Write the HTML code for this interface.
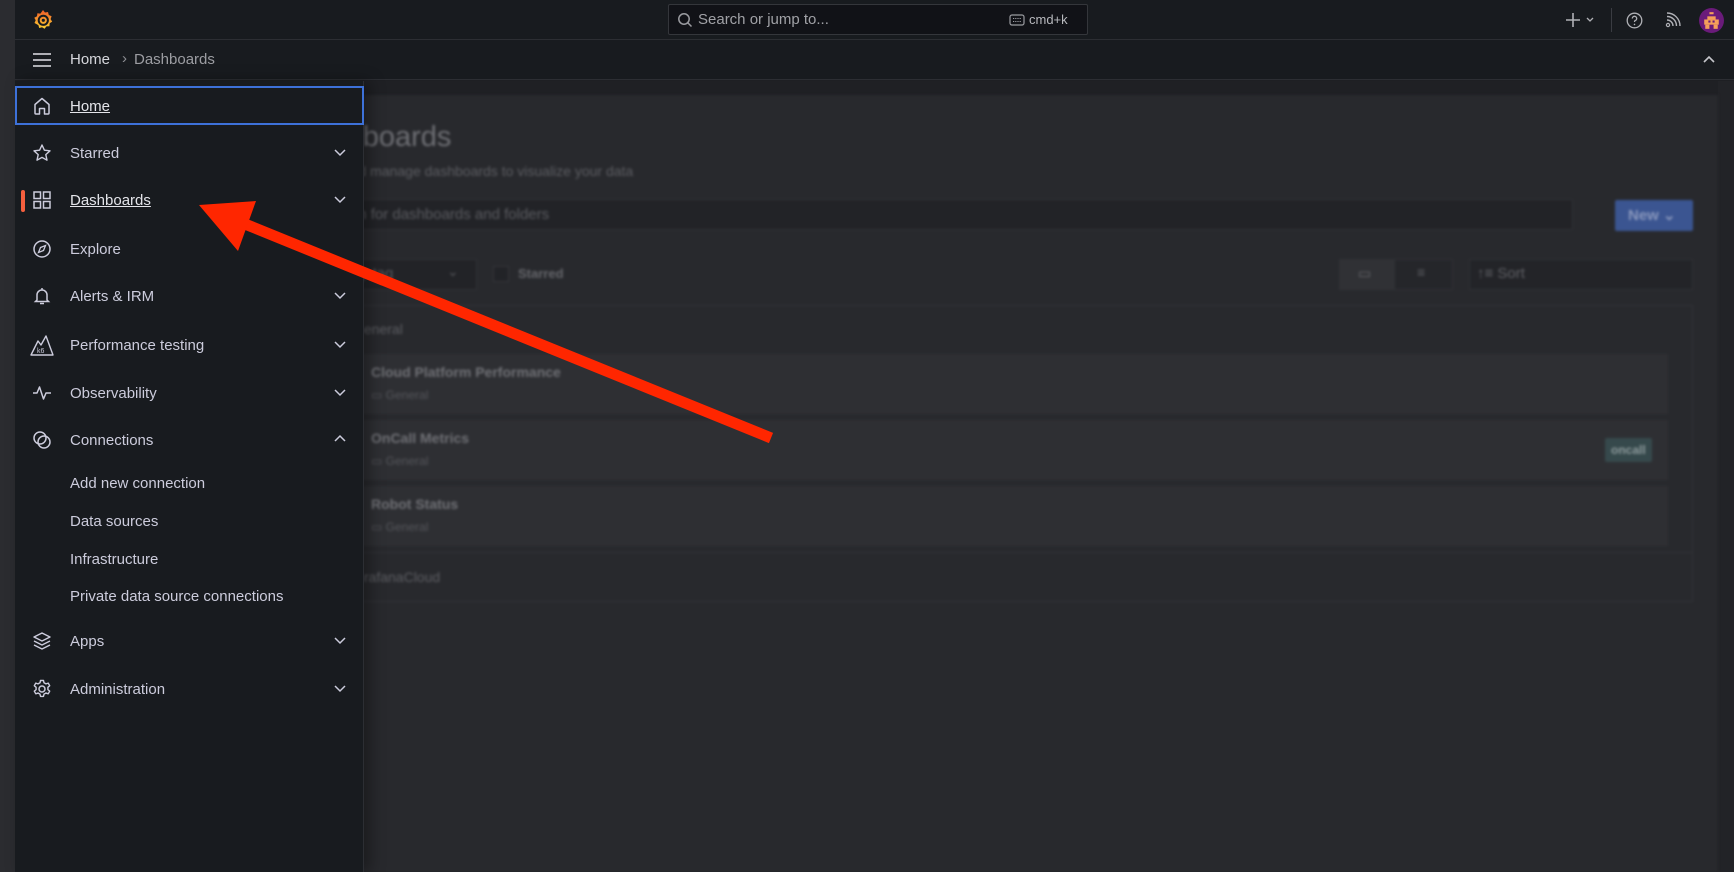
<!DOCTYPE html>
<html><head><meta charset="utf-8"><style>
*{box-sizing:border-box;margin:0;padding:0}
body{width:1734px;height:872px;overflow:hidden;background:#1e1f23;font-family:"Liberation Sans",sans-serif;position:relative}
.abs{position:absolute}
#left{left:0;top:0;width:15px;height:872px;background:#2b2c30}
#top{left:15px;top:0;right:0;height:40px;background:#181b1f;border-bottom:1px solid #2c2e33}
#crumb{left:15px;top:40px;right:0;height:40px;background:#181b1f;border-bottom:1px solid #2c2e33}
#main{left:15px;top:81px;right:0;bottom:0;background:#1f2024}
#panel{left:355px;top:95px;width:1363px;bottom:0;background:#28292d;filter:blur(1.2px)}
#rcol{left:1718px;top:81px;width:16px;bottom:0;background:#222327}
.t{color:#6c6d72;position:absolute;white-space:nowrap}
#side{left:15px;top:81px;width:349px;bottom:0;background:#181b1f;border-right:1px solid #2c2e33;box-shadow:6px 0 14px rgba(0,0,0,.35)}
.it{position:absolute;left:0;width:349px;height:40px;display:flex;align-items:center;color:#ccccdc;font-size:15px}
.it .ic{position:absolute;left:17px;top:10px;width:20px;height:20px}
.it .lb{position:absolute;left:55px}
.it .ch{position:absolute;left:318px;top:14px}
.sub{position:absolute;left:55px;color:#ccccdc;font-size:15px}
svg{display:block}
</style></head><body>
<div class="abs" id="left"></div>
<div class="abs" id="top">
 <svg class="abs" style="left:16px;top:8px" width="24" height="24" viewBox="0 0 24 24"><defs><linearGradient id="g" x1="0" y1="1" x2="0" y2="0"><stop offset="0" stop-color="#fcd130"/><stop offset="1" stop-color="#f05a28"/></linearGradient></defs><path d="M12 2l2 2.5 3-.5 .8 3 2.8 1.3-1 2.8 1.6 2.5-2.5 1.6-.3 3-3 .2-1.8 2.4-2.6-1.5-2.8.7-.8-2.9L3.5 15l1.2-2.7L3.3 9.7 6 8.3l.4-3 3 .3z" fill="url(#g)"/><circle cx="12.3" cy="12.3" r="4.6" fill="none" stroke="#181b1f" stroke-width="2"/><circle cx="12.3" cy="12.3" r="1.6" fill="#181b1f"/></svg>
 <div class="abs" style="left:653px;top:4px;width:420px;height:31px;background:#111217;border:1px solid #34363b;border-radius:2px">
  <svg class="abs" style="left:8px;top:7px" width="16" height="16" viewBox="0 0 16 16"><circle cx="7" cy="7" r="5.2" fill="none" stroke="#9a9ba0" stroke-width="1.5"/><path d="M11 11l3.5 3.5" stroke="#9a9ba0" stroke-width="1.5"/></svg>
  <span class="abs" style="left:29px;top:6px;color:#a0a1a6;font-size:15px">Search or jump to...</span>
  <svg class="abs" style="left:340px;top:9px" width="16" height="12" viewBox="0 0 16 12"><rect x="1" y="1" width="14" height="10" rx="2" fill="none" stroke="#9a9ba0" stroke-width="1.2"/><path d="M4 4.5h8M4 7.5h8" stroke="#9a9ba0" stroke-dasharray="1.2 1"/></svg>
  <span class="abs" style="left:360px;top:7px;color:#b8b9be;font-size:13px">cmd+k</span>
 </div>
 <svg class="abs" style="left:1550px;top:12px" width="16" height="16" viewBox="0 0 16 16"><path d="M8 1v14M1 8h14" stroke="#b0b1b6" stroke-width="1.6"/></svg>
 <svg class="abs" style="left:1570px;top:16px" width="10" height="8" viewBox="0 0 10 8"><path d="M2 2l3 3 3-3" fill="none" stroke="#b0b1b6" stroke-width="1.3"/></svg>
 <div class="abs" style="left:1596px;top:8px;width:1px;height:24px;background:#3a3c42"></div>
 <svg class="abs" style="left:1611px;top:12px" width="17" height="17" viewBox="0 0 17 17"><circle cx="8.5" cy="8.5" r="7.3" fill="none" stroke="#b0b1b6" stroke-width="1.3"/><path d="M6.3 6.5a2.2 2.2 0 1 1 2.8 2.1c-.6.2-.6.8-.6 1.4" fill="none" stroke="#b0b1b6" stroke-width="1.3"/><circle cx="8.5" cy="12.4" r=".8" fill="#b0b1b6"/></svg>
 <svg class="abs" style="left:1650px;top:12px" width="16" height="16" viewBox="0 0 16 16"><circle cx="3" cy="13" r="1.6" fill="none" stroke="#b0b1b6" stroke-width="1.2"/><path d="M2 8a6 6 0 0 1 6 6M2 4.5a9.5 9.5 0 0 1 9.5 9.5M2 1a13 13 0 0 1 13 13" fill="none" stroke="#b0b1b6" stroke-width="1.4"/></svg>
 <svg class="abs" style="left:1684px;top:8px" width="25" height="25" viewBox="0 0 24 24"><circle cx="12" cy="12" r="12" fill="#6a1b7a"/><rect x="10" y="4" width="4" height="2" fill="#f5a05a"/><rect x="8" y="8" width="8" height="3" fill="#f5a05a"/><rect x="5" y="11" width="14" height="5" fill="#f5a05a"/><rect x="6" y="16" width="4" height="4" fill="#f5a05a"/><rect x="14" y="16" width="4" height="4" fill="#f5a05a"/><rect x="9" y="12" width="2" height="2" fill="#6a1b7a"/><rect x="13" y="12" width="2" height="2" fill="#6a1b7a"/></svg>
</div>
<div class="abs" id="crumb">
 <svg class="abs" style="left:17px;top:12px" width="20" height="16" viewBox="0 0 20 16"><path d="M1 2h18M1 8h18M1 14h18" stroke="#c5c6cb" stroke-width="1.7"/></svg>
 <span class="abs" style="left:55px;top:11px;color:#d6d7dc;font-size:15px">Home</span>
 <span class="abs" style="left:107px;top:10px;color:#8e8f94;font-size:15px">›</span>
 <span class="abs" style="left:119px;top:11px;color:#9c9da2;font-size:15px">Dashboards</span>
 <svg class="abs" style="left:1687px;top:15px" width="14" height="10" viewBox="0 0 14 10"><path d="M2 7l5-5 5 5" fill="none" stroke="#c5c6cb" stroke-width="1.6"/></svg>
</div>
<div class="abs" id="main"></div>
<div class="abs" id="rcol"></div>
<div class="abs" id="panel">
 <div class="t" style="left:-60px;top:26px;font-size:29px;color:#6e6f74">Dashboards</div>
 <div class="t" style="left:-58px;top:68px;font-size:14px;color:#5c5d62">Create and manage dashboards to visualize your data</div>
 <div class="abs" style="left:0;top:104px;width:1218px;height:31px;background:#222327;border:1px solid #303136;border-radius:2px"></div>
 <div class="t" style="left:-36px;top:111px;font-size:15px;color:#5a5b60">Search for dashboards and folders</div>
 <div class="abs" style="left:1260px;top:105px;width:78px;height:31px;background:#3b5591;border-radius:2px"></div>
 <div class="t" style="left:1273px;top:111px;font-size:15px;color:#8a98bd;font-weight:bold">New ⌄</div>
 <div class="abs" style="left:0;top:164px;width:122px;height:31px;background:#222327;border:1px solid #303136"></div>
 <div class="t" style="left:-40px;top:170px;font-size:15px;color:#55565b">Filter by tag</div>
 <div class="t" style="left:92px;top:168px;font-size:14px;color:#55565b">⌄</div>
 <div class="abs" style="left:138px;top:171px;width:16px;height:16px;background:#222327;border:1px solid #34353a"></div>
 <div class="t" style="left:163px;top:171px;font-size:13px;color:#65666b;font-weight:bold">Starred</div>
 <div class="abs" style="left:984px;top:164px;width:114px;height:31px;border:1px solid #303136;background:#25262a"><div style="width:55px;height:29px;background:#303135"></div></div>
 <div class="t" style="left:1003px;top:170px;font-size:14px;color:#66676c">▭</div>
 <div class="t" style="left:1062px;top:169px;font-size:14px;color:#5a5b60">≡</div>
 <div class="abs" style="left:1114px;top:164px;width:224px;height:31px;border:1px solid #303136;background:#232428"></div>
 <div class="t" style="left:1122px;top:170px;font-size:15px;color:#5e5f64">↑≡ Sort</div>
 <div class="abs" style="left:0;top:210px;width:1338px;height:297px;border:1px solid #313237;background:#28292d"></div>
 <div class="t" style="left:-2px;top:226px;font-size:14px;color:#5c5d62">General</div>
 <div class="abs" style="left:0;top:259px;width:1313px;height:60px;background:#2e2f33"></div>
 <div class="t" style="left:16px;top:269px;font-size:14px;color:#707176;font-weight:bold">Cloud Platform Performance</div>
 <div class="t" style="left:16px;top:293px;font-size:12px;color:#55565b">▭ General</div>
 <div class="abs" style="left:0;top:325px;width:1313px;height:60px;background:#2e2f33"></div>
 <div class="t" style="left:16px;top:335px;font-size:14px;color:#707176;font-weight:bold">OnCall Metrics</div>
 <div class="t" style="left:16px;top:359px;font-size:12px;color:#55565b">▭ General</div>
 <div class="abs" style="left:1250px;top:343px;width:47px;height:24px;background:#36494c;border-radius:2px"></div>
 <div class="t" style="left:1256px;top:348px;font-size:12px;color:#8d9a9c;font-weight:bold">oncall</div>
 <div class="abs" style="left:0;top:391px;width:1313px;height:60px;background:#2e2f33"></div>
 <div class="t" style="left:16px;top:401px;font-size:14px;color:#707176;font-weight:bold">Robot Status</div>
 <div class="t" style="left:16px;top:425px;font-size:12px;color:#55565b">▭ General</div>
 <div class="abs" style="left:0;top:457px;width:1338px;height:1px;background:#313237"></div>
 <div class="t" style="left:-2px;top:474px;font-size:14px;color:#5c5d62">GrafanaCloud</div>
</div>
<div class="abs" id="side">
 <div class="abs" style="left:0;top:5px;width:349px;height:39px;border:2px solid #3d71d9"></div>
 <div class="it" style="top:5px"><svg class="ic" viewBox="0 0 20 20"><path d="M3 8.5L10 2.5l7 6V17a1 1 0 0 1-1 1h-3.5v-5.5h-5V18H4a1 1 0 0 1-1-1z" fill="none" stroke="#ccccdc" stroke-width="1.5" stroke-linejoin="round"/></svg><span class="lb" style="text-decoration:underline;color:#e4e5ea">Home</span></div>
 <div class="it" style="top:52px"><svg class="ic" viewBox="0 0 20 20"><path d="M10 2l2.4 5.2 5.6.6-4.2 3.8 1.2 5.6L10 14.4 5 17.2l1.2-5.6L2 7.8l5.6-.6z" fill="none" stroke="#ccccdc" stroke-width="1.4" stroke-linejoin="round"/></svg><span class="lb">Starred</span><svg class="ch" width="14" height="10" viewBox="0 0 14 10"><path d="M2 3l5 5 5-5" fill="none" stroke="#ccccdc" stroke-width="1.5"/></svg></div>
 <div class="abs" style="left:6px;top:109px;width:4px;height:22px;background:#f55f3e;border-radius:2px"></div>
 <div class="it" style="top:99px"><svg class="ic" viewBox="0 0 20 20"><g fill="none" stroke="#ccccdc" stroke-width="1.5"><rect x="2" y="2" width="6.5" height="6.5"/><rect x="11.5" y="2" width="6.5" height="6.5"/><rect x="2" y="11.5" width="6.5" height="6.5"/><rect x="11.5" y="11.5" width="6.5" height="6.5"/></g></svg><span class="lb" style="text-decoration:underline;color:#e4e5ea">Dashboards</span><svg class="ch" width="14" height="10" viewBox="0 0 14 10"><path d="M2 3l5 5 5-5" fill="none" stroke="#ccccdc" stroke-width="1.5"/></svg></div>
 <div class="it" style="top:148px"><svg class="ic" viewBox="0 0 20 20"><circle cx="10" cy="10" r="8" fill="none" stroke="#ccccdc" stroke-width="1.5"/><path d="M13.5 6.5l-2 5-5 2 2-5z" fill="none" stroke="#ccccdc" stroke-width="1.3"/></svg><span class="lb">Explore</span></div>
 <div class="it" style="top:195px"><svg class="ic" viewBox="0 0 20 20"><path d="M5 14V9a5 5 0 0 1 10 0v5l1.5 1.5h-13zM8 17.5h4M10 2v2" fill="none" stroke="#ccccdc" stroke-width="1.5"/></svg><span class="lb">Alerts &amp; IRM</span><svg class="ch" width="14" height="10" viewBox="0 0 14 10"><path d="M2 3l5 5 5-5" fill="none" stroke="#ccccdc" stroke-width="1.5"/></svg></div>
 <div class="it" style="top:244px"><svg class="ic" style="left:15px;width:24px;height:24px;top:8px" viewBox="0 0 24 24"><path d="M1 22L8 8l3 4 5-9 7 19z" fill="none" stroke="#ccccdc" stroke-width="1.4" stroke-linejoin="round"/><text x="7" y="20" font-size="7" fill="#ccccdc" font-family="Liberation Sans">k6</text></svg><span class="lb">Performance testing</span><svg class="ch" width="14" height="10" viewBox="0 0 14 10"><path d="M2 3l5 5 5-5" fill="none" stroke="#ccccdc" stroke-width="1.5"/></svg></div>
 <div class="it" style="top:292px"><svg class="ic" viewBox="0 0 20 20"><path d="M1 10h4l2.5-6 4 12 2.5-6h5" fill="none" stroke="#ccccdc" stroke-width="1.5" stroke-linejoin="round"/></svg><span class="lb">Observability</span><svg class="ch" width="14" height="10" viewBox="0 0 14 10"><path d="M2 3l5 5 5-5" fill="none" stroke="#ccccdc" stroke-width="1.5"/></svg></div>
 <div class="it" style="top:339px"><svg class="ic" viewBox="0 0 20 20"><circle cx="8" cy="8" r="6" fill="none" stroke="#ccccdc" stroke-width="1.5"/><circle cx="12" cy="12" r="6" fill="none" stroke="#ccccdc" stroke-width="1.5"/></svg><span class="lb">Connections</span><svg class="ch" width="14" height="10" viewBox="0 0 14 10"><path d="M2 7l5-5 5 5" fill="none" stroke="#ccccdc" stroke-width="1.5"/></svg></div>
 <div class="sub" style="top:394px">Add new connection</div>
 <div class="sub" style="top:432px">Data sources</div>
 <div class="sub" style="top:470px">Infrastructure</div>
 <div class="sub" style="top:507px">Private data source connections</div>
 <div class="it" style="top:540px"><svg class="ic" viewBox="0 0 20 20"><path d="M10 2l8 4-8 4-8-4zM2 10l8 4 8-4M2 14l8 4 8-4" fill="none" stroke="#ccccdc" stroke-width="1.4" stroke-linejoin="round"/></svg><span class="lb">Apps</span><svg class="ch" width="14" height="10" viewBox="0 0 14 10"><path d="M2 3l5 5 5-5" fill="none" stroke="#ccccdc" stroke-width="1.5"/></svg></div>
 <div class="it" style="top:588px"><svg class="ic" viewBox="0 0 20 20"><circle cx="10" cy="10" r="3" fill="none" stroke="#ccccdc" stroke-width="1.5"/><path d="M8.5 1.5h3l.5 2.3 2 1.1 2.2-.8 1.5 2.6-1.8 1.6v2.3l1.8 1.6-1.5 2.6-2.2-.8-2 1.1-.5 2.3h-3l-.5-2.3-2-1.1-2.2.8-1.5-2.6 1.8-1.6V8.3L2.3 6.7l1.5-2.6 2.2.8 2-1.1z" fill="none" stroke="#ccccdc" stroke-width="1.4" stroke-linejoin="round"/></svg><span class="lb">Administration</span><svg class="ch" width="14" height="10" viewBox="0 0 14 10"><path d="M2 3l5 5 5-5" fill="none" stroke="#ccccdc" stroke-width="1.5"/></svg></div>
</div>
<svg class="abs" style="left:0;top:0" width="1734" height="872"><path d="M771 438L240 222" stroke="#ff2600" stroke-width="11"/><path d="M199 205L256 201L238 251z" fill="#ff2600"/></svg>
</body></html>
